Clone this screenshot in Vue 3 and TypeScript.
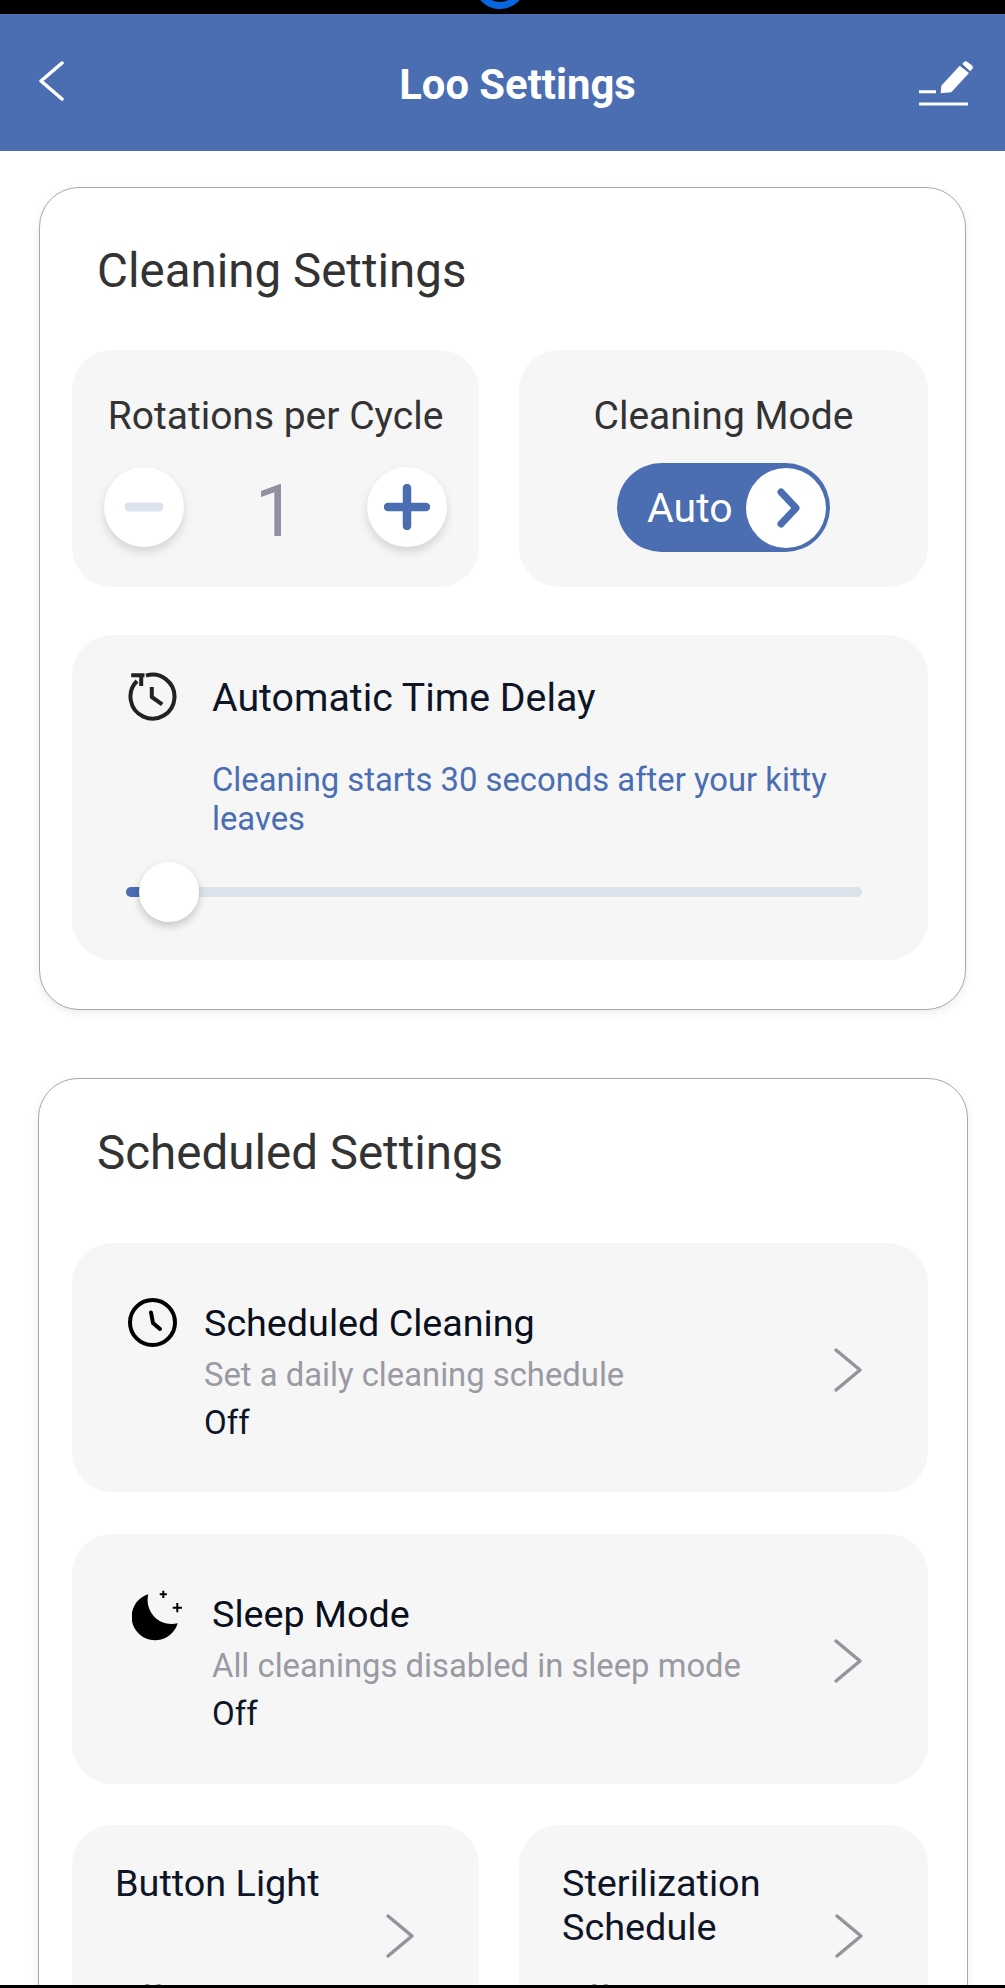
<script setup lang="ts">
interface ScheduleRow {
  title: string;
  hint: string;
  icon: 'clock' | 'moon';
}

const rows: ScheduleRow[] = [
  { title: 'Scheduled Cleaning', hint: 'Set a daily cleaning schedule', icon: 'clock' },
  { title: 'Sleep Mode', hint: 'All cleanings disabled in sleep mode', icon: 'moon' },
];

const smallTiles = [
  { lines: ['Button Light'], status: 'Off' },
  { lines: ['Sterilization', 'Schedule'], status: 'Off' },
];
</script>

<template>
  <div class="page">
    <div class="status-bar"><span class="camera"></span></div>
    <header class="nav">
      <svg class="back" width="26" height="40" viewBox="0 0 26 40">
        <path d="M24 2 L3 20 L24 38" />
      </svg>
      <h1>Loo Settings</h1>
      <svg class="edit" width="57" height="47" viewBox="0 0 57 47">
        <path class="pen" d="M23.300 26.700 L41.700 6.700 L51 14 L33.300 33.300 L22.700 34.300 Z" />
        <path class="pen" d="M44.300 5 L46 3 Q47.500 1.500 49.500 3 L54 6.500 Q55.500 8 54.500 9.500 L52.300 12.300 Z" />
        <path class="lines" d="M1 32.700 H18 M1 45 H50" />
      </svg>
    </header>

    <main class="content">
      <section class="card first">
        <h2>Cleaning Settings</h2>
        <div class="pair">
          <div class="tile control-tile">
            <div class="label">Rotations per Cycle</div>
            <div class="stepper">
              <button class="round">
                <svg width="40" height="12" viewBox="0 0 40 12"><path class="minus" d="M5 6 H35" /></svg>
              </button>
              <span class="count">1</span>
              <button class="round">
                <svg width="46" height="46" viewBox="0 0 46 46"><path class="plus" d="M23 4 V42 M4 23 H42" /></svg>
              </button>
            </div>
          </div>
          <div class="tile control-tile">
            <div class="label">Cleaning Mode</div>
            <div class="toggle">
              <span>Auto</span>
              <span class="knob">
                <svg width="26" height="40" viewBox="0 0 26 40"><path d="M6 4 L21 20 L6 36" /></svg>
              </span>
            </div>
          </div>
        </div>

        <div class="tile delay">
          <div class="delay-head">
            <svg width="54" height="52" viewBox="0 0 54 52">
              <path class="ring" d="M20 3.600 A22 22 0 1 1 11 9" />
              <path class="ring" d="M5.200 3.300 H18.500 M15.200 5 V14" />
              <path class="ring" d="M25.800 15 V25 L36.200 32.300" />
            </svg>
            <span>Automatic Time Delay</span>
          </div>
          <p>Cleaning starts 30 seconds after your kitty leaves</p>
          <div class="slider">
            <div class="fill"></div>
            <div class="thumb"></div>
          </div>
        </div>
      </section>

      <section class="card second">
        <h2>Scheduled Settings</h2>
        <div class="tile row" v-for="row in rows" :key="row.title" :class="row.icon">
          <svg v-if="row.icon === 'clock'" class="row-icon" width="50" height="50" viewBox="0 0 50 50">
            <circle class="ring-dark" cx="24.500" cy="24.500" r="22.500" />
            <path class="ring-dark" d="M23 14.500 L25 25 L32 31" />
          </svg>
          <svg v-else class="row-icon" width="52" height="52" viewBox="0 0 52 52">
            <path d="M16.300 5.300 A23.500 23.500 0 1 0 45.700 34.300 A24 24 0 0 1 16.300 5.300 Z" />
            <path d="M30.300 1.700 h2 v2.600 h2.600 v2 h-2.600 v2.600 h-2 v-2.600 h-2.600 v-2 h2.600 Z" />
            <path d="M44.300 14.100 h2 v3.600 h3.600 v2 h-3.600 v3.600 h-2 v-3.600 h-3.600 v-2 h3.600 Z" />
          </svg>
          <div class="row-text">
            <div class="row-title">{{ row.title }}</div>
            <div class="row-hint">{{ row.hint }}</div>
            <div class="row-status">Off</div>
          </div>
          <svg class="chevron" width="30" height="46" viewBox="0 0 30 46"><path d="M3 3 L27 23 L3 43" /></svg>
        </div>
        <div class="pair">
          <div class="tile small" v-for="tile in smallTiles" :key="tile.lines[0]">
            <div class="small-text">
              <div class="small-title" v-for="line in tile.lines" :key="line">{{ line }}</div>
            </div>
            <svg class="chevron" width="30" height="46" viewBox="0 0 30 46"><path d="M3 3 L27 23 L3 43" /></svg>
            <div class="small-status">{{ tile.status }}</div>
          </div>
        </div>
      </section>
    </main>
    <div class="nav-bar"></div>
  </div>
</template>

<style scoped>
.page {
  width: 1005px;
  height: 1988px;
  display: flex;
  flex-direction: column;
  overflow: hidden;
  background: #fff;
  font-family: Roboto, "Liberation Sans", sans-serif;
}
.status-bar {
  height: 14px;
  flex: none;
  background: #000;
  overflow: hidden;
  display: flex;
  justify-content: center;
}
.camera {
  width: 52px;
  height: 52px;
  margin-top: -43px;
  box-sizing: border-box;
  border: 7px solid #0a66e0;
  border-radius: 50%;
  margin-left: -5px;
}
.nav {
  height: 137px;
  flex: none;
  background: #4a6eb1;
  display: flex;
  align-items: center;
  justify-content: space-between;
  padding: 0 30px 0 38px;
}
.nav h1 {
  margin: 5px 0 0 53px;
  color: #fff;
  font-size: 41.800px;
  font-weight: 700;
  line-height: 44px;
}
.back {
  margin-top: -4px;
  fill: none;
  stroke: #fff;
  stroke-width: 3.500;
  stroke-linecap: round;
  stroke-linejoin: round;
}
.edit { margin-top: -1px; }
.pen { fill: #fff; }
.lines {
  fill: none;
  stroke: #fff;
  stroke-width: 3;
}
.content {
  flex: 1;
  min-height: 0;
  overflow: hidden;
  padding-top: 36px;
}
.card {
  box-sizing: border-box;
  background: #fff;
  border: 1.500px solid #a8a8a8;
  border-radius: 40px;
  box-shadow: 0 3px 8px rgba(0, 0, 0, 0.08);
}
.first {
  margin: 0 39px 0 39px;
  height: 823px;
  padding: 0 34px 0 32px;
}
.second {
  margin: 68px 37px 0 38px;
  padding: 0 36px 40px 33px;
}
h2 {
  margin: 0;
  color: #333;
  font-size: 47.500px;
  font-weight: 400;
  line-height: 52px;
  padding-left: 25px;
}
.first h2 { padding-top: 57px; height: 105px; }
.second h2 { padding-top: 48px; height: 116px; padding-left: 25px; }
.tile {
  background: #f6f6f7;
  border-radius: 40px;
  box-sizing: border-box;
}
.pair {
  display: grid;
  grid-template-columns: 407px 409px;
  gap: 40px;
}
.control-tile {
  height: 237px;
  padding-top: 45px;
  text-align: center;
}
.label {
  color: #333;
  font-size: 39px;
  line-height: 42px;
}
.stepper {
  display: flex;
  align-items: center;
  justify-content: space-between;
  padding: 0 32px;
  margin-top: 30px;
}
.round {
  width: 80px;
  height: 80px;
  border: 0;
  padding: 0;
  border-radius: 50%;
  background: #fff;
  box-shadow: 0 5px 10px rgba(0, 0, 0, 0.14);
  display: flex;
  align-items: center;
  justify-content: center;
}
.minus {
  fill: none;
  stroke: #dce3ec;
  stroke-width: 9;
  stroke-linecap: round;
}
.plus {
  fill: none;
  stroke: #4a6eb1;
  stroke-width: 8.500;
  stroke-linecap: round;
}
.count {
  color: #9090a0;
  font-size: 73px;
  font-weight: 400;
  line-height: 72px;
  padding-top: 8px;
}
.toggle {
  width: 213px;
  height: 89px;
  margin: 26px auto 0;
  background: #4a6eb1;
  border-radius: 45px;
  color: #fff;
  font-size: 41px;
  display: flex;
  align-items: center;
  justify-content: space-between;
  padding: 0 4px 0 30px;
  box-sizing: border-box;
}
.knob {
  width: 80px;
  height: 80px;
  border-radius: 50%;
  background: #fff;
  display: flex;
  align-items: center;
  justify-content: center;
}
.knob svg { margin-left: 4px; }
.knob path {
  fill: none;
  stroke: #4a6eb1;
  stroke-width: 7;
  stroke-linecap: round;
  stroke-linejoin: round;
}
.delay {
  margin-top: 48px;
  height: 325px;
  padding: 37px 50px 0 54px;
  width: 856px;
}
.delay-head {
  display: flex;
  align-items: center;
  gap: 32px;
  color: #0d1526;
  font-size: 39.300px;
  line-height: 52px;
}
.ring {
  fill: none;
  stroke: #222;
  stroke-width: 4;
  stroke-linejoin: round;
}
.delay p {
  margin: 37px 0 0 86px;
  color: #4a6eb1;
  font-size: 32.800px;
  line-height: 39px;
}
.slider {
  position: relative;
  height: 10px;
  width: 736px;
  margin: 48px 0 0 0;
  background: #dce3ec;
  border-radius: 5px;
}
.fill {
  width: 30px;
  height: 10px;
  border-radius: 5px;
  background: #4a6eb1;
}
.thumb {
  position: absolute;
  left: 13px;
  top: -25px;
  width: 60px;
  height: 60px;
  border-radius: 50%;
  background: #fff;
  box-shadow: 0 4px 8px rgba(0, 0, 0, 0.2);
}
.row {
  display: flex;
  align-items: flex-start;
  height: 249px;
  padding: 55px 65px 0 56px;
  margin-bottom: 42px;
  width: 856px;
}
.row.moon {
  height: 250px;
  padding: 55px 65px 0 60px;
  margin-bottom: 41px;
}
.row-icon { flex: none; fill: #000; }
.ring-dark {
  fill: none;
  stroke: #000;
  stroke-width: 4;
  stroke-linecap: round;
  stroke-linejoin: round;
}
.row-text {
  flex: 1;
  margin: 4px 0 0 26px;
}
.moon .row-text { margin-left: 28px; }
.row-title {
  color: #0a0f1c;
  font-size: 37.700px;
  line-height: 42px;
}
.row-hint {
  color: #9a9aa3;
  font-size: 32.800px;
  line-height: 40px;
  margin-top: 11px;
}
.row-status {
  color: #0d1526;
  font-size: 33px;
  line-height: 40px;
  margin-top: 8px;
}
.chevron {
  flex: none;
  fill: none;
  stroke: #94949c;
  stroke-width: 3.500;
  stroke-linecap: round;
  stroke-linejoin: round;
  margin-top: 49px;
}
.small {
  height: 260px;
  position: relative;
  padding: 36px 64px 0 43px;
  display: flex;
  justify-content: space-between;
}
.small .chevron { margin-top: 52px; }
.small-title {
  color: #0d1526;
  font-size: 37.800px;
  line-height: 44px;
}
.small-status {
  position: absolute;
  left: 43px;
  top: 154px;
  color: #0d1526;
  font-size: 33px;
}
.nav-bar {
  height: 3px;
  flex: none;
  background: #000;
}
</style>

<style>
html, body { margin: 0; background: #fff; }
</style>
